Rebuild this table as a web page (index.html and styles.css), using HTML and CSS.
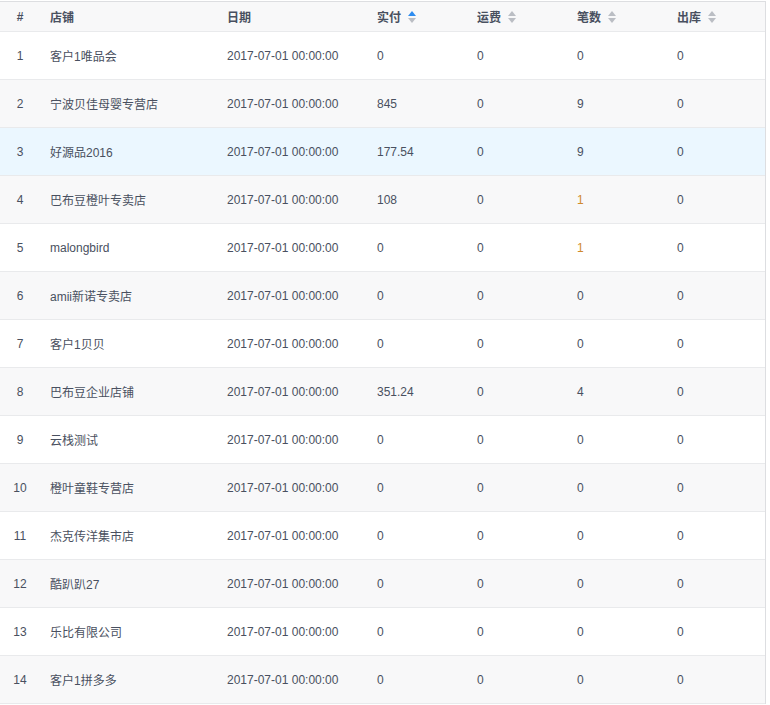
FILE: index.html
```html
<!DOCTYPE html>
<html lang="zh-CN">
<head>
<meta charset="utf-8">
<title>店铺统计</title>
<link rel="stylesheet" href="styles.css">
</head>
<body>
<div class="table-wrap">
  <table class="grid">
    <colgroup>
      <col class="c-idx"><col class="c-shop"><col class="c-date"><col class="c-num"><col class="c-num"><col class="c-num"><col class="c-last">
    </colgroup>
    <thead>
      <tr>
        <th class="idx">#</th>
        <th>店铺</th>
        <th>日期</th>
        <th><span class="th-in">实付<svg class="sort" width="8" height="12" viewBox="0 0 8 12"><path class="up on" d="M0 5 L4 0 L8 5 Z"/><path class="down" d="M0 7 L8 7 L4 12 Z"/></svg></span></th>
        <th><span class="th-in">运费<svg class="sort" width="8" height="12" viewBox="0 0 8 12"><path class="up" d="M0 5 L4 0 L8 5 Z"/><path class="down" d="M0 7 L8 7 L4 12 Z"/></svg></span></th>
        <th><span class="th-in">笔数<svg class="sort" width="8" height="12" viewBox="0 0 8 12"><path class="up" d="M0 5 L4 0 L8 5 Z"/><path class="down" d="M0 7 L8 7 L4 12 Z"/></svg></span></th>
        <th><span class="th-in">出库<svg class="sort" width="8" height="12" viewBox="0 0 8 12"><path class="up" d="M0 5 L4 0 L8 5 Z"/><path class="down" d="M0 7 L8 7 L4 12 Z"/></svg></span></th>
      </tr>
    </thead>
    <tbody>
      <tr><td class="idx">1</td><td>客户1唯品会</td><td>2017-07-01 00:00:00</td><td>0</td><td>0</td><td>0</td><td>0</td></tr>
      <tr class="stripe"><td class="idx">2</td><td>宁波贝佳母婴专营店</td><td>2017-07-01 00:00:00</td><td>845</td><td>0</td><td>9</td><td>0</td></tr>
      <tr class="hover"><td class="idx">3</td><td>好源品2016</td><td>2017-07-01 00:00:00</td><td>177.54</td><td>0</td><td>9</td><td>0</td></tr>
      <tr class="stripe"><td class="idx">4</td><td>巴布豆橙叶专卖店</td><td>2017-07-01 00:00:00</td><td>108</td><td>0</td><td class="warn">1</td><td>0</td></tr>
      <tr><td class="idx">5</td><td>malongbird</td><td>2017-07-01 00:00:00</td><td>0</td><td>0</td><td class="warn">1</td><td>0</td></tr>
      <tr class="stripe"><td class="idx">6</td><td>amii新诺专卖店</td><td>2017-07-01 00:00:00</td><td>0</td><td>0</td><td>0</td><td>0</td></tr>
      <tr><td class="idx">7</td><td>客户1贝贝</td><td>2017-07-01 00:00:00</td><td>0</td><td>0</td><td>0</td><td>0</td></tr>
      <tr class="stripe"><td class="idx">8</td><td>巴布豆企业店铺</td><td>2017-07-01 00:00:00</td><td>351.24</td><td>0</td><td>4</td><td>0</td></tr>
      <tr><td class="idx">9</td><td>云栈测试</td><td>2017-07-01 00:00:00</td><td>0</td><td>0</td><td>0</td><td>0</td></tr>
      <tr class="stripe"><td class="idx">10</td><td>橙叶童鞋专营店</td><td>2017-07-01 00:00:00</td><td>0</td><td>0</td><td>0</td><td>0</td></tr>
      <tr><td class="idx">11</td><td>杰克传洋集市店</td><td>2017-07-01 00:00:00</td><td>0</td><td>0</td><td>0</td><td>0</td></tr>
      <tr class="stripe"><td class="idx">12</td><td>酷趴趴27</td><td>2017-07-01 00:00:00</td><td>0</td><td>0</td><td>0</td><td>0</td></tr>
      <tr><td class="idx">13</td><td>乐比有限公司</td><td>2017-07-01 00:00:00</td><td>0</td><td>0</td><td>0</td><td>0</td></tr>
      <tr class="stripe"><td class="idx">14</td><td>客户1拼多多</td><td>2017-07-01 00:00:00</td><td>0</td><td>0</td><td>0</td><td>0</td></tr>
    </tbody>
  </table>
</div>
</body>
</html>
```
FILE: styles.css
```css
html, body {
  margin: 0;
  padding: 0;
  background: #fff;
}
body {
  font-family: "Liberation Sans", "Noto Sans CJK SC", sans-serif;
  font-size: 12px;
  color: #495060;
}
.table-wrap {
  width: 765px;
  margin-top: 1px;
  border-top: 1px solid #dddee1;
  border-right: 1px solid #dddee1;
}
.grid {
  width: 765px;
  table-layout: fixed;
  border-collapse: collapse;
  border-spacing: 0;
}
.c-idx { width: 40px; }
.c-shop { width: 177px; }
.c-date { width: 150px; }
.c-num { width: 100px; }
.c-last { width: 98px; }
.grid th,
.grid td {
  padding: 0 10px;
  text-align: left;
  vertical-align: middle;
  border-bottom: 1px solid #e9eaec;
  white-space: nowrap;
  overflow: hidden;
}
.grid th {
  height: 29px;
  background: #f8f8f9;
  font-weight: bold;
}
.grid td {
  height: 47px;
}
.grid .idx {
  text-align: center;
  padding: 0;
}
.stripe td { background: #f8f8f9; }
.hover td { background: #ebf7ff; }
.warn { color: #d08a2c; }
.th-in {
  display: inline-flex;
  align-items: center;
  gap: 7px;
}
.sort { display: block; }
.sort path { fill: #bbbec4; }
.sort path.on { fill: #2d8cf0; }
```
